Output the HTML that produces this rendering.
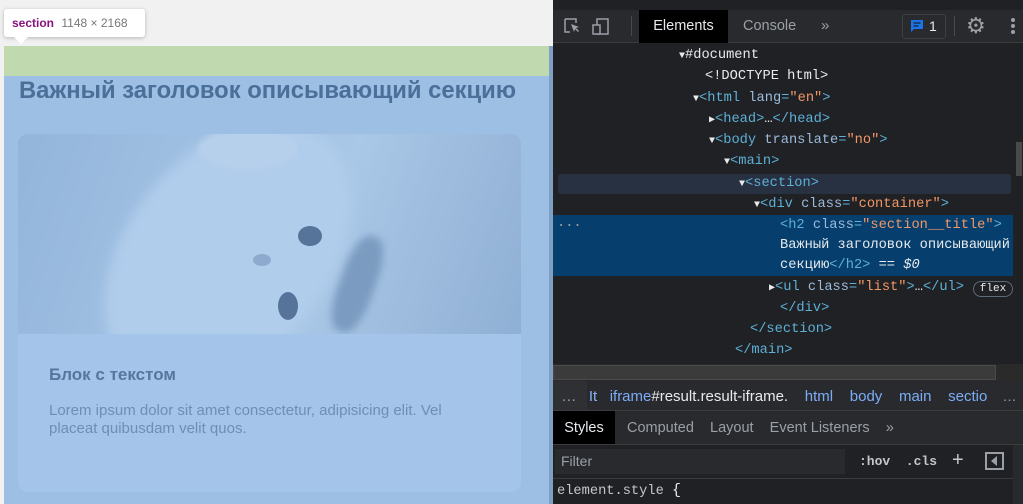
<!DOCTYPE html>
<html><head><meta charset="utf-8"><style>
*{margin:0;padding:0;box-sizing:border-box}
body{width:1023px;height:504px;overflow:hidden;position:relative;background:#202124;font-family:"Liberation Sans",sans-serif}
.a{position:absolute}
.m{font-family:"Liberation Mono",monospace;font-size:13.7px;color:#e8eaed;white-space:pre;line-height:16px}
.t{color:#5db0d7}.v{color:#f29766}.at{color:#9bbbdc}
</style></head><body>
<div class="a" style="left:0;top:0;width:553px;height:504px;background:#f1f1f1"></div>
<div class="a" style="left:4px;top:46px;width:548px;height:30px;background:#c0d9ae"></div>
<div class="a" style="left:4px;top:76px;width:548px;height:428px;background:#9dbfe4"></div>
<div class="a" style="left:549px;top:46px;width:4px;height:458px;background:#7f9fc4"></div>
<div class="a" style="left:19px;top:76px;font-size:23.8px;font-weight:bold;color:#4a6f98;line-height:30px;white-space:nowrap">Важный заголовок описывающий секцию</div>
<div class="a" style="left:18px;top:134px;width:503px;height:358px;border-radius:10px;background:#a4c5e9"></div>
<div class="a" style="left:18px;top:134px;width:503px;height:200px;border-radius:10px 10px 0 0;overflow:hidden;background:linear-gradient(110deg,#93b5da 0%,#a2c2e4 40%,#a9c7e6 60%,#8fafd4 100%)">
 <div class="a" style="left:110px;top:-30px;width:200px;height:300px;border-radius:50%;background:#b1cdec;transform:rotate(40deg);filter:blur(6px)"></div>
 <div class="a" style="left:180px;top:-5px;width:100px;height:40px;border-radius:50%;background:#b6d0ec;filter:blur(3px)"></div>
 <div class="a" style="left:322px;top:100px;width:35px;height:100px;border-radius:40%;background:#7b9bc0;transform:rotate(20deg);filter:blur(4px)"></div>
 <div class="a" style="left:280px;top:92px;width:24px;height:20px;border-radius:50%;background:#56749a"></div>
 <div class="a" style="left:260px;top:158px;width:20px;height:28px;border-radius:50%;background:#56749a"></div>
 <div class="a" style="left:235px;top:120px;width:18px;height:12px;border-radius:50%;background:#8eabcf"></div>
</div>
<div class="a" style="left:49px;top:365px;font-size:17px;font-weight:bold;color:#55779f">Блок с текстом</div>
<div class="a" style="left:49px;top:402px;font-size:15px;color:#6e8eb4;line-height:18px;width:430px">Lorem ipsum dolor sit amet consectetur, adipisicing elit. Vel placeat quibusdam velit quos.</div>
<div class="a" style="left:4px;top:9px;width:141px;height:28px;background:#fff;border-radius:3px;box-shadow:0 1px 4px rgba(0,0,0,.25);font-size:12px;line-height:28px;padding-left:8px"><b style="color:#881280">section</b> <span style="color:#777;margin-left:4px">1148 × 2168</span></div>
<div class="a" style="left:14px;top:37px;width:0;height:0;border-left:7px solid transparent;border-right:7px solid transparent;border-top:7px solid #fff"></div>
<div class="a" style="left:553px;top:0;width:470px;height:10px;background:#202124"></div>
<div class="a" style="left:553px;top:10px;width:470px;height:33px;background:#292a2d;border-bottom:1px solid #3c3c3c"></div>
<svg class="a" style="left:563px;top:16px" width="60" height="22" viewBox="0 0 60 22"><path d="M2 3h11v4M2 3v13h5" stroke="#9aa0a6" stroke-width="1.5" fill="none"/><path d="M8 8l8 3-3 1 3 3-1 1-3-3-1 3z" fill="#9aa0a6"/><rect x="34" y="3" width="11" height="15" stroke="#9aa0a6" stroke-width="1.5" fill="none"/><rect x="30" y="9" width="7" height="9" fill="#292a2d" stroke="#9aa0a6" stroke-width="1.5"/></svg>
<div class="a" style="left:631px;top:16px;width:1px;height:20px;background:#4a4a4a"></div>
<div class="a" style="left:639px;top:10px;width:89px;height:33px;background:#000;color:#e8eaed;font-size:14.5px;line-height:33px;text-align:center">Elements</div>
<div class="a" style="left:743px;top:10px;color:#9aa0a6;font-size:14.5px;line-height:33px">Console</div>
<div class="a" style="left:821px;top:10px;color:#9aa0a6;font-size:15px;line-height:31px">»</div>
<div class="a" style="left:902px;top:14px;width:44px;height:25px;border:1px solid #3c4043;border-radius:3px"></div>
<svg class="a" style="left:910px;top:19px" width="14" height="15"><path d="M1 1h12v9H4l-3 3z" fill="#1a73e8"/><path d="M3.5 4h7M3.5 7h5" stroke="#202124" stroke-width="1.2"/></svg>
<div class="a" style="left:929px;top:14px;color:#e8eaed;font-size:14px;line-height:25px">1</div>
<div class="a" style="left:954px;top:16px;width:1px;height:20px;background:#4a4a4a"></div>
<div class="a" style="left:966px;top:11px;color:#9aa0a6;font-size:22px;line-height:30px">⚙</div>
<div class="a" style="left:1011px;top:18px;width:4px;height:4px;border-radius:2px;background:#9aa0a6;box-shadow:0 6px 0 #9aa0a6,0 12px 0 #9aa0a6"></div>
<div class="a" style="left:558px;top:174px;width:453px;height:20px;background:#283142;border-radius:3px"></div>
<div class="a" style="left:553px;top:215px;width:460px;height:61px;background:#063f6d"></div>
<div class="a" style="left:1013px;top:44px;width:10px;height:320px;background:#202124"></div>
<div class="a" style="left:1016px;top:142px;width:6px;height:34px;background:#4a4a4a"></div>
<div class="a m" style="left:679px;top:48px"><span style="font-size:10px">▼</span>#document</div>
<div class="a m" style="left:705px;top:69px">&lt;!DOCTYPE html&gt;</div>
<div class="a m" style="left:693px;top:91px"><span style="font-size:10px">▼</span><span class="t">&lt;html</span> <span class="at">lang</span><span class="t">=</span><span class="v">"en"</span><span class="t">&gt;</span></div>
<div class="a m" style="left:709px;top:112px"><span style="font-size:10px">▶</span><span class="t">&lt;head&gt;</span>…<span class="t">&lt;/head&gt;</span></div>
<div class="a m" style="left:709px;top:133px"><span style="font-size:10px">▼</span><span class="t">&lt;body</span> <span class="at">translate</span><span class="t">=</span><span class="v">"no"</span><span class="t">&gt;</span></div>
<div class="a m" style="left:724px;top:154px"><span style="font-size:10px">▼</span><span class="t">&lt;main&gt;</span></div>
<div class="a m" style="left:739px;top:176px"><span style="font-size:10px">▼</span><span class="t">&lt;section&gt;</span></div>
<div class="a m" style="left:754px;top:197px"><span style="font-size:10px">▼</span><span class="t">&lt;div</span> <span class="at">class</span><span class="t">=</span><span class="v">"container"</span><span class="t">&gt;</span></div>
<div class="a m" style="left:557px;top:216px;color:#9aa0a6">...</div>
<div class="a m" style="left:780px;top:218px"><span class="t">&lt;h2</span> <span class="at">class</span><span class="t">=</span><span class="v">"section__title"</span><span class="t">&gt;</span></div>
<div class="a m" style="left:780px;top:238px">Важный заголовок описывающий</div>
<div class="a m" style="left:780px;top:258px">секцию<span class="t">&lt;/h2&gt;</span> == <i>$0</i></div>
<div class="a m" style="left:769px;top:280px"><span style="font-size:10px">▶</span><span class="t">&lt;ul</span> <span class="at">class</span><span class="t">=</span><span class="v">"list"</span><span class="t">&gt;</span>…<span class="t">&lt;/ul&gt;</span></div>
<div class="a" style="left:973px;top:281px;width:40px;height:16px;border:1px solid #5f6a7a;border-radius:8px;color:#e8eaed;font-family:'Liberation Mono',monospace;font-size:11px;line-height:14px;text-align:center">flex</div>
<div class="a m" style="left:780px;top:301px"><span class="t">&lt;/div&gt;</span></div>
<div class="a m" style="left:750px;top:322px"><span class="t">&lt;/section&gt;</span></div>
<div class="a m" style="left:735px;top:343px"><span class="t">&lt;/main&gt;</span></div>
<div class="a" style="left:553px;top:364px;width:470px;height:17px;background:#2a2a2a"></div>
<div class="a" style="left:553px;top:365px;width:443px;height:15px;background:#3b3b3b;border:1px solid #4a4a4a"></div>
<div class="a" style="left:553px;top:381px;width:470px;height:30px;background:#292a2d;border-bottom:1px solid #3c3c3c"></div>
<div class="a" style="left:553px;top:381px;width:34px;height:29px;background:#2e3033"></div>
<div class="a" style="left:553px;top:381px;font-size:15px;line-height:31px;color:#9aa0a6;white-space:pre">  …  <span style="color:#8ab4f8"> It   </span><span style="color:#7cacf8">iframe</span><span style="color:#e8eaed">#result.result-iframe.</span><span style="color:#7cacf8">    html    body    main    sectio</span></div>
<div class="a" style="left:996px;top:381px;width:27px;height:29px;background:#292a2d;color:#9aa0a6;font-size:14px;line-height:31px;text-align:center">…</div>
<div class="a" style="left:553px;top:411px;width:470px;height:34px;background:#292a2d;border-bottom:1px solid #3c3c3c"></div>
<div class="a" style="left:553px;top:411px;width:62px;height:33px;background:#000;color:#e8eaed;font-size:14.5px;line-height:34px;text-align:center">Styles</div>
<div class="a" style="left:627px;top:411px;color:#9aa0a6;font-size:14.5px;line-height:34px;white-space:pre">Computed    Layout    Event Listeners    »</div>
<div class="a" style="left:553px;top:445px;width:470px;height:34px;background:#202124;border-bottom:1px solid #3c3c3c"></div>
<div class="a" style="left:555px;top:449px;width:290px;height:25px;background:#292a2d;color:#9aa0a6;font-size:14px;line-height:25px;padding-left:6px">Filter</div>
<div class="a" style="left:859px;top:449px;font-family:'Liberation Mono',monospace;font-weight:bold;font-size:13px;color:#c4c7ca;line-height:25px;white-space:pre">:hov  .cls</div>
<div class="a" style="left:952px;top:447px;color:#c4c7ca;font-size:20px;line-height:26px">+</div>
<div class="a" style="left:985px;top:452px;width:19px;height:18px;border:2px solid #9aa0a6"></div>
<div class="a" style="left:991px;top:456px;width:0;height:0;border-top:5px solid transparent;border-bottom:5px solid transparent;border-right:6px solid #9aa0a6"></div>
<div class="a" style="left:1013px;top:445px;width:10px;height:59px;background:#292a2d"></div>
<div class="a m" style="left:557px;top:483px;color:#c4c7ca">element.style <span style="color:#e8eaed;font-size:15px">{</span></div>
</body></html>
